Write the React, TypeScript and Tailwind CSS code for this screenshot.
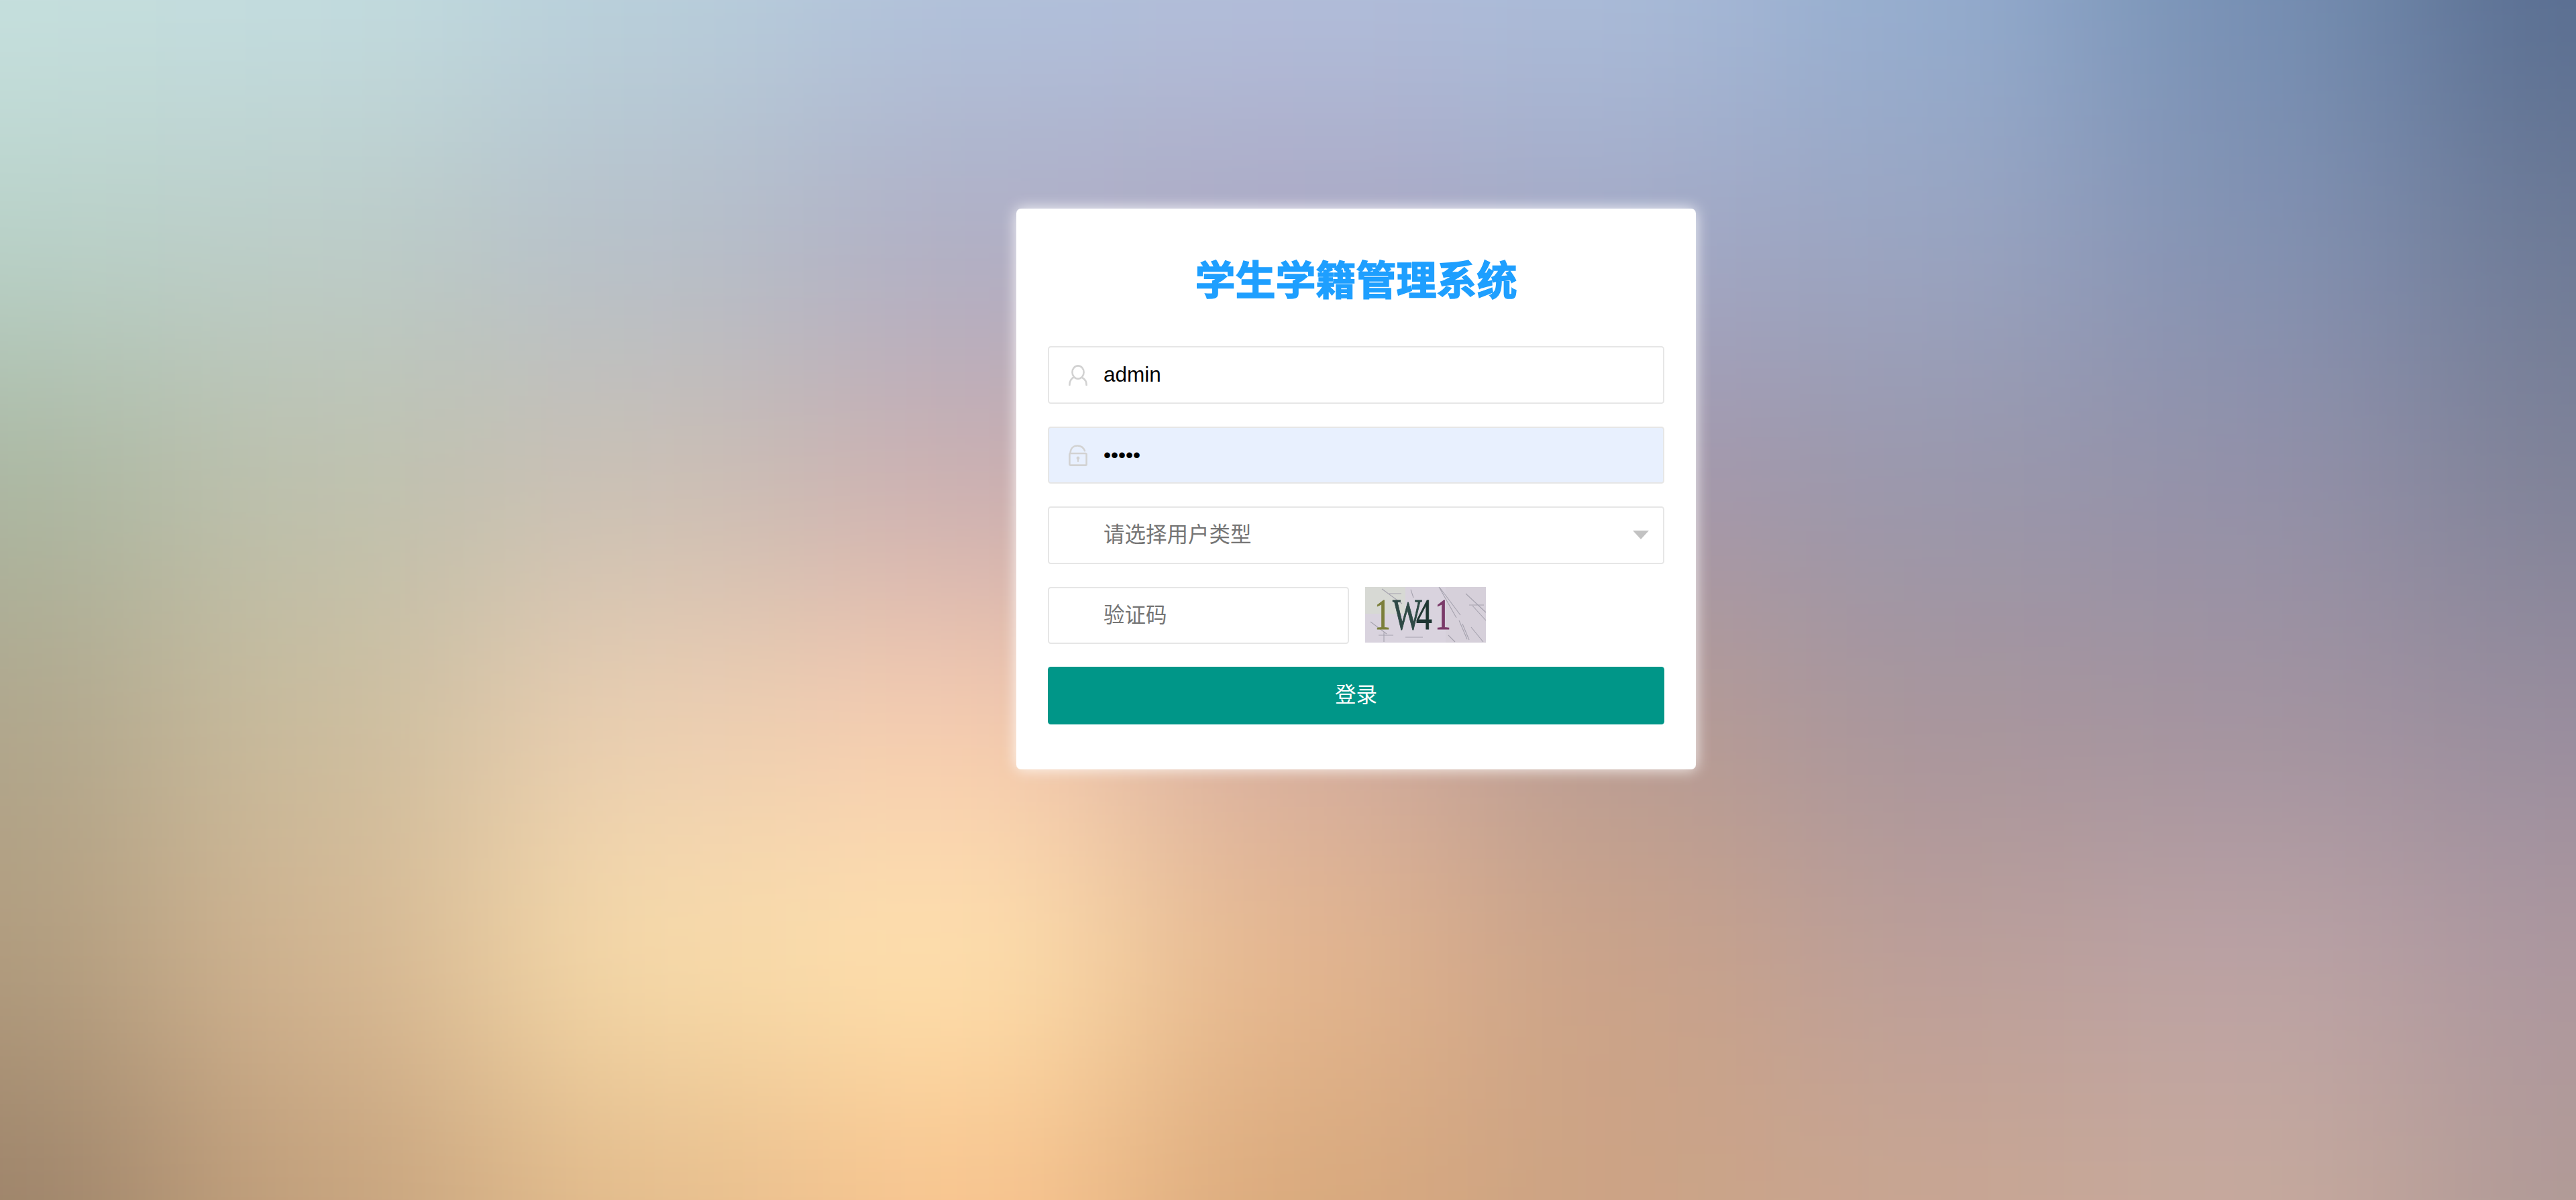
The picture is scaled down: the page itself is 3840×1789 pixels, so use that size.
import React from "react"

// colour samples of the blurred photo behind the login card, 9 columns by 6 rows
const backdrop = [
  ["#c6e0df", "#c3dde0", "#b9d0dc", "#b1c2dc", "#b2bedb", "#aabcd9", "#94adcf", "#7690b4", "#586d90"],
  ["#b9d2c9", "#bccdc9", "#b5bfca", "#aeaec5", "#aba8c4", "#a3a9c6", "#9aa5c2", "#8392b3", "#6d7a96"],
  ["#aab7a1", "#bdc1ae", "#cabfb4", "#cbaeb0", "#b9a3a9", "#a697aa", "#9997ac", "#9391a9", "#7f8298"],
  ["#b0a68c", "#cbbd9e", "#eccfb2", "#f8ccb0", "#d6aea0", "#b89c94", "#a8959c", "#a3939f", "#988d9e"],
  ["#b19c7e", "#d4b692", "#f8dcaa", "#ffe2ae", "#e6b890", "#cba389", "#bc9f9a", "#bca3a5", "#ad979f"],
  ["#9c8269", "#c4a17c", "#e4bc8c", "#f9c48e", "#d9a97c", "#cca384", "#c9a692", "#c7aa9d", "#b19a96"],
]

const Backdrop = () => (
  <svg className="absolute inset-0 h-full w-full" viewBox="0 0 3840 1789" preserveAspectRatio="none" aria-hidden="true">
    <defs>
      <filter id="soft" x="-20%" y="-20%" width="140%" height="140%" colorInterpolationFilters="sRGB">
        <feGaussianBlur stdDeviation="150" />
      </filter>
    </defs>
    <g filter="url(#soft)">
      {backdrop.map((row, r) =>
        row.map((c, i) => {
          const w = 480
          const h = 358
          const x = i * w - w / 2
          const y = r * h - h / 2
          const left = i === 0 ? 800 : 0
          const top = r === 0 ? 800 : 0
          const right = i === row.length - 1 ? 800 : 0
          const bottom = r === backdrop.length - 1 ? 800 : 0
          return (
            <rect
              key={`${r}-${i}`}
              x={x - left}
              y={y - top}
              width={w + left + right + 1}
              height={h + top + bottom + 1}
              fill={c}
            />
          )
        }),
      )}
    </g>
  </svg>
)

const UserIcon = () => (
  <svg width="28" height="31" viewBox="0 0 28 31" fill="none" stroke="#d2d2d2" strokeWidth="2.6" strokeLinecap="round">
    <ellipse cx="14" cy="11" rx="8.6" ry="9.6" />
    <path d="M1.4 30c0-6 2.5-9.5 6-11.5" />
    <path d="M21 19.5c3.5 2 5.6 5.5 5.6 10.5" />
  </svg>
)

const LockIcon = () => (
  <svg width="28" height="32" viewBox="0 0 28 32" fill="none" stroke="#d2d2d2" strokeWidth="2.6" strokeLinecap="round">
    <path d="M2.5 12C3 5 7.5 1.5 13 1.5c5 0 9 2.5 11 7.5" />
    <rect x="1.4" y="13" width="25.2" height="17.6" rx="1.4" />
    <circle cx="14" cy="20" r="2.4" fill="#d2d2d2" stroke="none" />
    <path d="M14 21v4" strokeWidth="2" />
  </svg>
)

const Captcha = () => (
  <svg className="h-[83px] w-[180px] shrink-0" viewBox="0 0 180 83" aria-label="验证码图片">
    <defs>
      <filter id="fuzz">
        <feGaussianBlur stdDeviation="0.7" />
      </filter>
    </defs>
    <rect width="180" height="83" fill="#d9d3de" />
    <g filter="url(#fuzz)">
      <rect x="0" y="0" width="60" height="40" fill="#d7d9d4" />
      <rect x="120" y="0" width="60" height="83" fill="#d6d0da" />
      <g stroke="#a5a2ae" strokeWidth="1.1" fill="none">
        <path d="M25 3l30 22M36 10h18M68 4l4 12M110 0l26 46M112 2l30 40" />
        <path d="M150 10l30 28M160 28l20 22M155 27h22M140 50l12 28M145 55l10 24M158 60l18 22" />
        <path d="M8 52l24 18M20 72h22M28 68v14M60 75h26M124 72l10 10" />
      </g>
      <g fontFamily="'Liberation Serif', serif" fontSize="66" strokeWidth="1">
        <text transform="translate(14 63) scale(0.72 1)" fill="#7b7f3a" stroke="#7b7f3a">1</text>
        <text transform="translate(41 63) scale(0.7 1)" fill="#2e4a45" stroke="#2e4a45">W</text>
        <text transform="translate(76 63) scale(0.72 1)" fill="#1e3530" stroke="#1e3530">4</text>
        <text transform="translate(104 63) scale(0.72 1)" fill="#7a3a68" stroke="#7a3a68">1</text>
      </g>
    </g>
  </svg>
)

const fieldClass =
  "h-[85.5px] rounded-[4.5px] border-[2.25px] border-[#e6e6e6] pl-[81px] pr-8 text-[31.5px] text-black outline-none placeholder:text-[#757575]"

export default function App() {
  return (
    <div className="relative min-h-screen overflow-hidden font-['Liberation_Sans','Noto_Sans_CJK_SC',sans-serif]">
      <Backdrop />
      <div className="relative pl-[1515px] pt-[311px]">
        <div className="w-[1013px] rounded-[7px] bg-white px-[47px] pb-[67px] pt-[64px] shadow-[0_0_22px_rgba(255,255,255,0.9)]">
          <h1 className="mb-[51px] text-center text-[60px] leading-[90px] font-bold text-[#1e9fff] [-webkit-text-stroke:1.5px_#1e9fff]">
            学生学籍管理系统
          </h1>
          <form className="flex flex-col gap-[34px]">
            <div className="relative">
              <span className="absolute left-[31px] top-[28px]">
                <UserIcon />
              </span>
              <input className={`${fieldClass} w-full bg-white`} defaultValue="admin" />
            </div>
            <div className="relative">
              <input className={`${fieldClass} w-full bg-[#e8f0fe]`} type="password" defaultValue="admin" />
              <span className="absolute left-[31px] top-[27px]">
                <LockIcon />
              </span>
            </div>
            <div className="relative">
              <input className={`${fieldClass} w-full bg-white`} placeholder="请选择用户类型" readOnly />
              <span className="absolute right-[23px] top-[36px] h-0 w-0 border-x-[12.5px] border-t-[13.5px] border-x-transparent border-t-[#c2c2c2]" />
            </div>
            <div className="flex items-start gap-[24px]">
              <input className={`${fieldClass} w-[449px] bg-white`} placeholder="验证码" />
              <Captcha />
            </div>
            <button type="button" className="h-[85.5px] w-full rounded-[4.5px] bg-[#009688] text-[31.5px] text-white">
              登录
            </button>
          </form>
        </div>
      </div>
    </div>
  )
}
